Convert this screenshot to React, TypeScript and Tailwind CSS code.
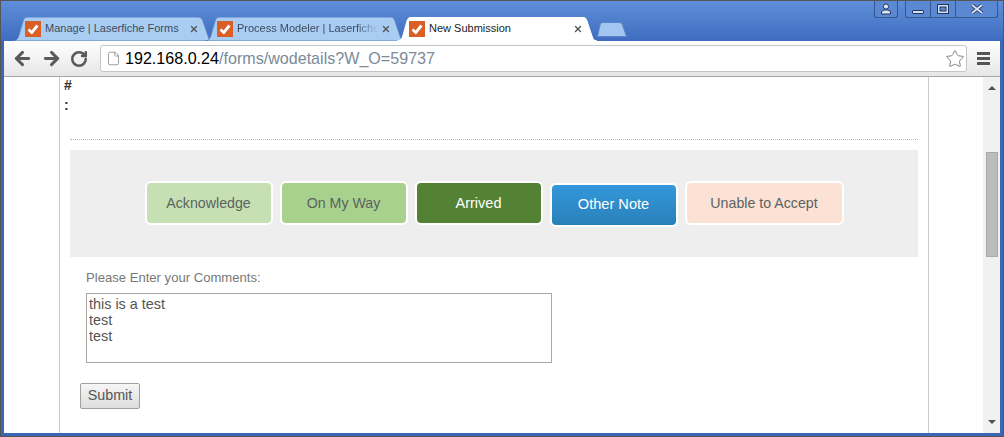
import React from 'react';
import { ArrowLeft, ArrowRight, RotateCw, File, Star, X } from 'lucide-react';

const Favicon = () => (
  <svg width="16" height="16" viewBox="0 0 16 16" className="shrink-0">
    <rect width="16" height="16" fill="#d95f26" />
    <path d="M3.5 8.5 L6.8 11.5 L12.5 4.5" fill="none" stroke="#fff" strokeWidth="2.8" />
  </svg>
);

const Tab = ({ title, active, fade }: { title: string; active?: boolean; fade?: boolean }) => (
  <div className="relative w-[200px] h-[24px] shrink-0 -mr-[8px]">
    <svg className={`absolute inset-0 ${active ? 'z-10' : ''}`} width="200" height="24" viewBox="0 0 200 24">
      <path
        d="M0 24 C3 24 5 22 6 18 L10 4 C11 1 12 0 16 0 L184 0 C188 0 189 1 190 4 L195 19 C196 22 197 24 200 24 Z"
        fill={active ? '#ffffff' : '#a9ccf3'}
        stroke={active ? '#ffffff' : '#5a84c4'}
        strokeWidth="1"
      />
    </svg>
    <div className="relative z-20 flex items-center h-full pl-[12px] pr-[10px]">
      <Favicon />
      <span className={`ml-[4px] -mt-[1px] text-[11px] leading-none whitespace-nowrap overflow-hidden flex-1 ${active ? 'text-[#222]' : 'text-[#3c4c60]'}`} style={fade ? { maskImage: 'linear-gradient(90deg,#000 85%,transparent)' } : undefined}>
        {title}
      </span>
      <X size={10} strokeWidth={3.2} className="text-[#555] ml-[3px] shrink-0 mr-[4px]" />
    </div>
  </div>
);

const ActionButton = ({ label, className }: { label: string; className: string }) => (
  <div className={`flex items-center justify-center h-[44px] rounded-[6px] border-2 border-white ${className}`}>
    {label}
  </div>
);

export default function App() {
  return (
    <div className="relative w-[1004px] h-[437px] overflow-hidden flex flex-col border border-[#555] bg-[#3a66b5] font-['Liberation_Sans',Arial,sans-serif]">
      {/* window buttons */}
      <div className="absolute top-0 right-[5px] z-30 flex gap-[7px]">
        <div className="w-[24px] h-[17px] flex items-center justify-center bg-[#5a88d2] border border-t-0 border-[#35578f] rounded-b-[3px]">
          <svg width="12" height="12" viewBox="0 0 12 12">
            <circle cx="6" cy="3.5" r="2.6" fill="#dbe7f8" stroke="#23375e" />
            <path d="M1.5 11 L1.5 8.5 L4 7 L8 7 L10.5 8.5 L10.5 11 Z" fill="#dbe7f8" stroke="#23375e" />
          </svg>
        </div>
        <div className="flex h-[17px] bg-[#5a88d2] border border-t-0 border-[#35578f] rounded-b-[3px]">
          <div className="w-[25px] flex items-end justify-center pb-[3px] border-r border-[#35578f]">
            <div className="w-[12px] h-[4px] bg-[#cfe0f7] border border-[#23375e] rounded-[1px]" />
          </div>
          <div className="w-[25px] flex items-center justify-center border-r border-[#35578f]">
            <svg width="12" height="10" viewBox="0 0 12 10">
              <rect x="0.5" y="0.5" width="11" height="9" fill="#cfe0f7" stroke="#23375e" />
              <rect x="3" y="3" width="6" height="4" fill="#5a88d2" stroke="#23375e" />
            </svg>
          </div>
          <div className="w-[41px] flex items-center justify-center">
            <svg width="12" height="10" viewBox="0 0 12 10">
              <path d="M1 1 L11 9 M11 1 L1 9" stroke="#23375e" strokeWidth="3.4" />
              <path d="M1 1 L11 9 M11 1 L1 9" stroke="#dbe7f8" strokeWidth="1.8" />
            </svg>
          </div>
        </div>
      </div>

      {/* tab strip */}
      <div className="h-[40px] shrink-0 flex items-end pl-[12px] bg-gradient-to-b from-[#5f8fd9] to-[#3e6cc0]">
        <Tab title="Manage | Laserfiche Forms" />
        <Tab title="Process Modeler | Laserfiche" fade />
        <Tab title="New Submission" active />
        <svg width="30" height="15" viewBox="0 0 30 15" className="ml-[8px] mb-[4px] z-10">
          <path d="M0.5 14.5 L3 3 C3.5 1 4.5 0.5 7 0.5 L21 0.5 C24 0.5 24.5 1 25.5 3 L29.5 14.5 Z" fill="#a2c6f0" stroke="#5a84c4" />
        </svg>
      </div>

      <div className="flex-1 mx-[3px] mb-[3px] flex flex-col bg-white min-h-0">
        {/* toolbar */}
        <div className="h-[36px] shrink-0 flex items-center bg-gradient-to-b from-white to-[#e6e6e6] border-b border-[#a6a6a6] rounded-t-[3px]">
          <div className="w-[96px] flex items-center pl-[8px] gap-[8px] text-[#5a5a5a]">
            <ArrowLeft size={21} strokeWidth={3.4} />
            <ArrowRight size={21} strokeWidth={3.4} />
            <RotateCw size={18} strokeWidth={3.4} />
          </div>
          <div className="w-[867px] h-[27px] flex items-center bg-white border border-[#c4c4c4] rounded-[3px]">
            <File size={15} strokeWidth={1.3} className="ml-[5px] text-[#8a8a8a] shrink-0" />
            <span className="ml-[4px] text-[16.1px] whitespace-nowrap text-[#7c8a99]">
              <span className="text-black">192.168.0.24</span>/forms/wodetails?W_O=59737
            </span>
            <Star size={20} strokeWidth={1.1} className="ml-auto mr-[1px] text-[#777]" />
          </div>
          <div className="flex-1 flex flex-col items-center gap-[2px]">
            <div className="w-[13px] h-[3px] bg-[#555]" />
            <div className="w-[13px] h-[3px] bg-[#555]" />
            <div className="w-[13px] h-[3px] bg-[#555]" />
          </div>
        </div>

        {/* page */}
        <div className="flex-1 flex min-h-0">
          <div className="w-[56px] shrink-0 border-r border-[#ccc]" />
          <div className="w-[869px] shrink-0 border-r border-[#ccc]">
            <div className="pl-[4px] h-[62px] text-[14px] leading-[17px] font-bold text-[#333]">
              <div className="h-[20px] leading-[16px]">#</div>
              <div>:</div>
            </div>
            <div className="ml-[10px] w-[848px] border-t border-dotted border-[#bbb]" />
            <div className="ml-[10px] w-[848px] mt-[10px] h-[107px] bg-[#eeeeee] flex justify-center pt-[31px] gap-[7px]">
              <ActionButton label="Acknowledge" className="w-[128px] pt-[2px] text-[14.2px] bg-[#c6e0b4] text-[#5b6360]" />
              <ActionButton label="On My Way" className="w-[128px] pt-[2px] text-[14.2px] bg-[#a9d18e] text-[#5b6360]" />
              <ActionButton label="Arrived" className="w-[128px] pt-[2px] text-[14.5px] bg-[#548235] text-white" />
              <ActionButton label="Other Note" className="w-[128px] mt-[2px] text-[14.6px] bg-gradient-to-b from-[#3498db] to-[#2980b9] text-white" />
              <ActionButton label="Unable to Accept" className="w-[159px] pt-[2px] text-[14.2px] bg-[#fbe2d5] text-[#5b6360]" />
            </div>
            <div className="ml-[26px] mt-[13px] text-[13.1px] leading-[16px] text-[#777]">Please Enter your Comments:</div>
            <div className="ml-[26px] mt-[7px] w-[466px] h-[70px] border border-[#a9a9a9] px-[2px] py-[2px] text-[14.4px] leading-[16px] text-[#555]">
              <div>this is a test</div>
              <div>test</div>
              <div>test</div>
            </div>
            <button className="block ml-[20px] mt-[20px] w-[60px] h-[26px] border border-[#a0a0a0] rounded-[2px] bg-gradient-to-b from-[#f6f6f6] to-[#dedede] text-[14.3px] text-[#555]">
              Submit
            </button>
          </div>
          <div className="flex-1" />
          {/* scrollbar */}
          <div className="w-[17px] shrink-0 bg-[#f1f1f1] flex flex-col items-center pt-[9px]">
            <div className="w-0 h-0 border-x-[4px] border-x-transparent border-b-[4px] border-b-[#505050]" />
            <div className="w-[12px] h-[105px] mt-[62px] bg-[#bcbcbc] border border-[#a8a8a8]" />
            <div className="mt-auto mb-[9px] w-0 h-0 border-x-[4px] border-x-transparent border-t-[4px] border-t-[#505050]" />
          </div>
        </div>
      </div>
    </div>
  );
}
